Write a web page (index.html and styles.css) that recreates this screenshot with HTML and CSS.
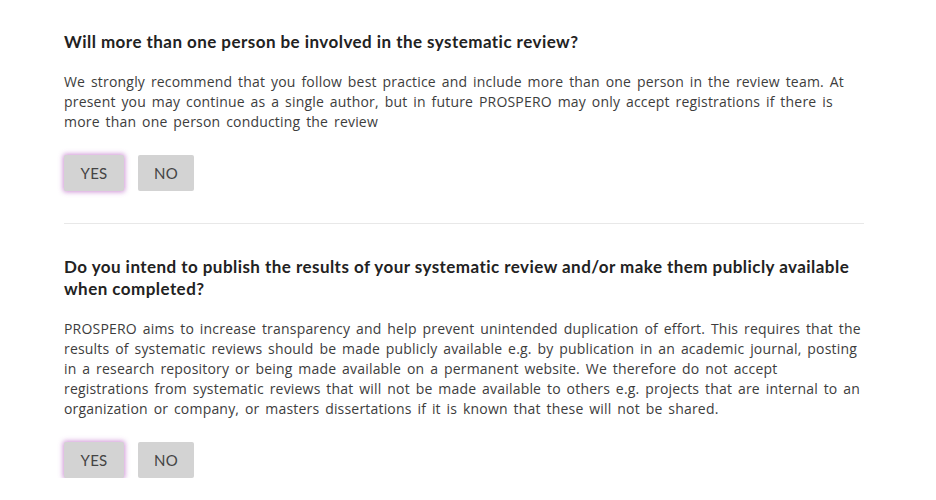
FILE: index.html
```html
<!DOCTYPE html>
<html lang="en">
<head>
<meta charset="utf-8">
<title>PROSPERO registration</title>
<link rel="stylesheet" href="styles.css">
</head>
<body>
<main class="page">
  <section class="question">
    <h2 class="q-title">Will more than one person be involved in the systematic review?</h2>
    <p class="q-text">We strongly recommend that you follow best practice and include more than one person in the review team. At present you may continue as a single author, but in future PROSPERO may only accept registrations if there is more than one person conducting the review</p>
    <div class="choices">
      <button class="choice is-focus" type="button">YES</button>
      <button class="choice" type="button">NO</button>
    </div>
  </section>
  <hr class="divider">
  <section class="question">
    <h2 class="q-title">Do you intend to publish the results of your systematic review and/or make them publicly available when completed?</h2>
    <p class="q-text">PROSPERO aims to increase transparency and help prevent unintended duplication of effort. This requires that the results of systematic reviews should be made publicly available e.g. by publication in an academic journal, posting in a research repository or being made available on a permanent website. We therefore do not accept registrations from systematic reviews that will not be made available to others e.g. projects that are internal to an organization or company, or masters dissertations if it is known that these will not be shared.</p>
    <div class="choices">
      <button class="choice is-focus" type="button">YES</button>
      <button class="choice" type="button">NO</button>
    </div>
  </section>
</main>
</body>
</html>
```

FILE: styles.css
```css
html, body {
  margin: 0;
  padding: 0;
  background: #ffffff;
}

body {
  font-family: Lato, "Open Sans", Arial, sans-serif;
  color: #3a3a3a;
}

.page {
  width: 800px;
  padding: 31px 0 0 64px;
}

.question {
  display: flex;
  flex-direction: column;
}

.q-title {
  margin: 0;
  font-family: Lato, Arial, sans-serif;
  font-size: 17px;
  line-height: 22px;
  font-weight: 700;
  letter-spacing: 0.45px;
  color: #222222;
}

.q-text {
  margin: 19px 0 0;
  font-family: "Open Sans", Arial, sans-serif;
  font-size: 14px;
  line-height: 20px;
  letter-spacing: 0.19px;
  word-spacing: 2px;
  color: #3d3d3d;
}

.choices {
  display: flex;
  gap: 14px;
  margin-top: 23px;
}

.choice {
  height: 36px;
  padding: 0;
  border: none;
  border-radius: 2px;
  background: #d3d3d3;
  color: #444444;
  font-family: Lato, Arial, sans-serif;
  font-size: 15px;
  letter-spacing: 0.3px;
  cursor: pointer;
}

.choice.is-focus {
  width: 60px;
  box-shadow: 0 0 5px 1px rgba(190, 110, 200, 0.75);
}

.choice:not(.is-focus) {
  width: 56px;
}

.divider {
  margin: 32px 0 32px;
  border: none;
  border-top: 1px solid #e8e8e8;
}
```
